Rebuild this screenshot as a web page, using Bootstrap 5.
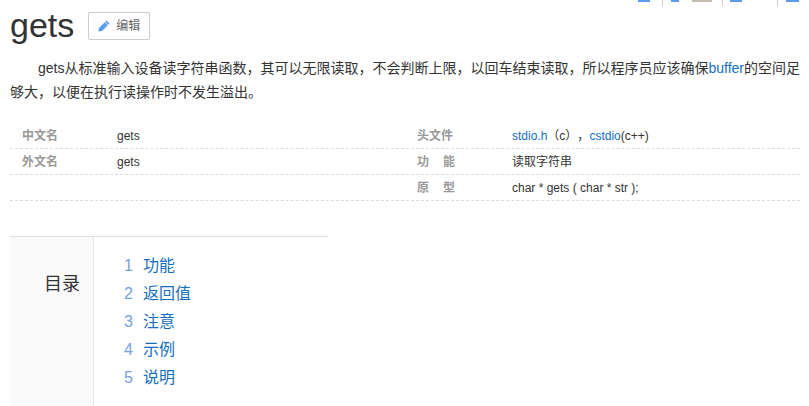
<!DOCTYPE html>
<html lang="zh">
<head>
    <meta charset="UTF-8">
    <title>gets</title>
    <link href="https://cdn.jsdelivr.net/npm/bootstrap@5.3.0/dist/css/bootstrap.min.css" rel="stylesheet">
    <style>
        html, body { height: 406px; overflow: hidden; }
        body {
            background: #fff;
            color: #333;
            font-family: "Liberation Sans", "Noto Sans CJK SC", sans-serif;
            font-size: 14px;
            text-spacing-trim: space-all;
        }
        a { color: #136ec2; text-decoration: none; }
        .top-strip { height: 6px; margin-bottom: -2px; overflow: hidden; padding-left: 638px; }
        .strip-mark { display: block; height: 2px; background: #5a9df0; }
        .strip-text { display: block; height: 2px; width: 20px; margin-left: 13px; background: #c4bcb0; }
        .strip-sep { display: block; width: 1px; height: 6px; background: #ccc; }
        .mark-a { width: 12px; }
        .mark-b { width: 8px; margin-left: 8px; }
        .mark-c { width: 12px; margin-left: 7px; }
        .mark-d { width: 13px; margin-left: 8px; }
        .sep-a { margin-left: 12px; }
        .sep-b { margin-left: 10px; }
        .sep-c { margin-left: 35px; }
        .page-wrap { padding: 0 9px 0 10px; }
        .lemma-head { height: 45px; }
        .lemma-title { font-size: 34px; line-height: 45px; font-weight: 400; color: #333; margin: -3px 14px 0 0; }
        .edit-btn {
            width: 62px;
            height: 28px;
            margin-top: -1px;
            border: 1px solid #ccc;
            border-radius: 2px;
            font-size: 12px;
            color: #666;
            background: #fff;
        }
        .edit-btn svg { margin-right: 6px; }
        .summary { line-height: 24px; text-indent: 28px; margin: 7px 0 0; height: 48px; }
        .info-grid { margin-top: 19px; width: 790px; }
        .info-row { height: 26px; border-bottom: 1px dashed #dcdcdc; font-size: 12px; line-height: 26px; }
        .info-half { width: 395px; }
        .info-label { width: 107px; flex: none; padding-left: 12px; font-weight: 700; color: #999; }
        .label-gap { display: inline-block; width: 14px; }
        .toc-box { margin-top: 35px; width: 318px; height: 170px; border-top: 1px solid #e0e0e0; }
        .toc-title { width: 84px; background: #fafafa; border-right: 1px solid #e8e8e8; font-size: 18px; line-height: 24px; padding: 35px 13px 0 0; text-align: right; color: #333; }
        .toc-list { margin: 15px 0 0 30px; padding: 0; list-style: none; font-size: 16px; line-height: 28px; }
        .toc-num { display: inline-block; width: 19px; color: #74a2e0; }
    </style>
</head>
<body>
    <div class="top-strip d-flex">
        <span class="strip-mark mark-a"></span>
        <span class="strip-sep sep-a"></span>
        <span class="strip-mark mark-b"></span>
        <span class="strip-text"></span>
        <span class="strip-sep sep-b"></span>
        <span class="strip-mark mark-c"></span>
        <span class="strip-sep sep-c"></span>
        <span class="strip-mark mark-d"></span>
    </div>
    <div class="page-wrap">
        <div class="lemma-head d-flex align-items-center">
            <h1 class="lemma-title">gets</h1>
            <button type="button" class="edit-btn d-flex align-items-center justify-content-center p-0">
                <svg width="12" height="12" viewBox="0 0 12 12"><path d="M8.500 0.500l3 3-7.500 7.500L0.500 11.500 1 8z" fill="#5a9df0"/><path d="M7 2l3 3" stroke="#fff" stroke-width="0.800"/></svg>
                <span>编辑</span>
            </button>
        </div>
        <p class="summary">gets从标准输入设备读字符串函数，其可以无限读取，不会判断上限，以回车结束读取，所以程序员应该确保<a href="#">buffer</a>的空间足够大，以便在执行读操作时不发生溢出。</p>

        <div class="info-grid">
            <div class="info-row d-flex">
                <div class="info-half d-flex"><div class="info-label">中文名</div><div>gets</div></div>
                <div class="info-half d-flex"><div class="info-label">头文件</div><div><a href="#">stdio.h</a>（c），<a href="#">cstdio</a>(c++)</div></div>
            </div>
            <div class="info-row d-flex">
                <div class="info-half d-flex"><div class="info-label">外文名</div><div>gets</div></div>
                <div class="info-half d-flex"><div class="info-label">功<span class="label-gap"></span>能</div><div>读取字符串</div></div>
            </div>
            <div class="info-row d-flex">
                <div class="info-half d-flex"><div class="info-label"></div><div></div></div>
                <div class="info-half d-flex"><div class="info-label">原<span class="label-gap"></span>型</div><div>char * gets ( char * str );</div></div>
            </div>
        </div>

        <div class="toc-box d-flex">
            <div class="toc-title">目录</div>
            <ol class="toc-list">
                <li><span class="toc-num">1</span><a href="#">功能</a></li>
                <li><span class="toc-num">2</span><a href="#">返回值</a></li>
                <li><span class="toc-num">3</span><a href="#">注意</a></li>
                <li><span class="toc-num">4</span><a href="#">示例</a></li>
                <li><span class="toc-num">5</span><a href="#">说明</a></li>
            </ol>
        </div>
    </div>
    <script src="https://cdn.jsdelivr.net/npm/bootstrap@5.3.0/dist/js/bootstrap.bundle.min.js"></script>
</body>
</html>
